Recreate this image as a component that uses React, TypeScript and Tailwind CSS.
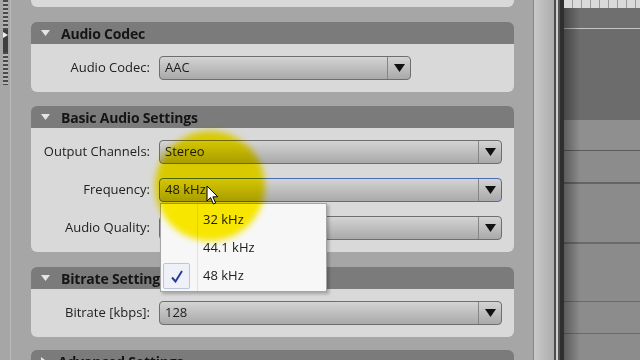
import React from 'react'

type DropProps = {
  value: string
  width: string
  focused?: boolean
}

function Dropdown({ value, width, focused }: DropProps) {
  return (
    <div
      className={`${width} h-[24px] flex rounded-[4px] border bg-gradient-to-b from-[#d4d4d4] to-[#a9a9a9] ${
        focused ? 'border-[#4d6bb3]' : 'border-[#6e6e6e]'
      }`}
    >
      <div className="flex-1 flex items-center pl-[5px] text-[13px] text-[#1c1c1c]">
        {value}
      </div>
      <div className="w-[23px] flex items-center justify-center border-l border-[#858585]">
        <svg width="11" height="8" viewBox="0 0 11 8">
          <path d="M0 0 H11 L5.5 8 Z" fill="#111" />
        </svg>
      </div>
    </div>
  )
}

function Header({ title, open = true }: { title: string; open?: boolean }) {
  return (
    <div className="h-[22px] shrink-0 rounded-t-[6px] bg-[#7b7b7b] flex items-center pl-[10px] gap-[11px]">
      {open ? (
        <svg width="9" height="6" viewBox="0 0 9 6">
          <path d="M0 0 H9 L4.5 6 Z" fill="#e4e4e4" />
        </svg>
      ) : (
        <svg width="6" height="9" viewBox="0 0 6 9">
          <path d="M0 0 V9 L6 4.5 Z" fill="#e4e4e4" />
        </svg>
      )}
      <span className="font-bold text-[14px] text-[#151515] tracking-[-0.2px]">{title}</span>
    </div>
  )
}

function Row({ label, children }: { label: string; children: React.ReactNode }) {
  return (
    <div className="flex items-center">
      <div className="w-[128px] pr-[9px] text-right text-[13px] text-[#222]">{label}</div>
      {children}
    </div>
  )
}

export default function App() {
  return (
    <div className="relative w-[640px] h-[360px] overflow-hidden flex bg-[#a6a6a6] font-['Open_Sans',sans-serif]">
      {/* left edge strip */}
      <div className="w-[31px] shrink-0 flex">
        <div className="ml-[3px] w-[5px] h-[85px] flex flex-col">
          <div className="h-[30px] bg-[repeating-linear-gradient(to_bottom,#4a4a4a_0px,#4a4a4a_2px,#b5b5b5_2px,#b5b5b5_4px)]" />
          <div className="h-[22px] bg-[#3f3f3f] flex items-start">
            <svg width="5" height="6" viewBox="0 0 5 6" className="mt-[2px]">
              <path d="M0 0 L5 3 L0 6 Z" fill="#eee" />
            </svg>
          </div>
          <div className="flex-1 bg-[repeating-linear-gradient(to_bottom,#4a4a4a_0px,#4a4a4a_2px,#b5b5b5_2px,#b5b5b5_4px)]" />
        </div>
        <div className="ml-[2px] w-px bg-[#bcbcbc]" />
      </div>

      {/* settings panel */}
      <div className="w-[483px] shrink-0 flex flex-col">
        <div className="h-[7px] shrink-0 rounded-b-[6px] bg-[#d9d9d9]" />

        <div className="mt-[15px] shrink-0">
          <Header title="Audio Codec" />
          <div className="rounded-b-[6px] bg-[#d9d9d9] py-[12px] pr-[12px]">
            <Row label="Audio Codec:">
              <Dropdown value="AAC" width="w-[252px]" />
            </Row>
          </div>
        </div>

        <div className="mt-[14px] shrink-0">
          <Header title="Basic Audio Settings" />
          <div className="rounded-b-[6px] bg-[#d9d9d9] py-[12px] pr-[12px] flex flex-col gap-[14px]">
            <Row label="Output Channels:">
              <Dropdown value="Stereo" width="w-[343px]" />
            </Row>
            <Row label="Frequency:">
              <Dropdown value="48 kHz" width="w-[343px]" focused />
            </Row>
            <Row label="Audio Quality:">
              <Dropdown value="" width="w-[343px]" />
            </Row>
          </div>
        </div>

        <div className="mt-[15px] shrink-0">
          <Header title="Bitrate Settings" />
          <div className="rounded-b-[6px] bg-[#d9d9d9] py-[12px] pr-[12px]">
            <Row label="Bitrate [kbps]:">
              <Dropdown value="128" width="w-[343px]" />
            </Row>
          </div>
        </div>

        <div className="mt-[13px] shrink-0">
          <Header title="Advanced Settings" open={false} />
        </div>
      </div>

      {/* splitter */}
      <div className="w-[20px] shrink-0 border-r border-[#878787]" />
      <div className="w-[20px] shrink-0 bg-gradient-to-r from-[#c9c9c9] to-[#adadad]" />
      <div className="w-[10px] shrink-0 flex">
        <div className="w-[2px] bg-[#4c4c4c]" />
        <div className="w-[2px] bg-[#cfcfcf]" />
        <div className="w-[2px] bg-[#555]" />
        <div className="flex-1 bg-[#2f2f2f]" />
      </div>

      {/* timeline area */}
      <div className="relative flex-1 flex flex-col">
        <div className="h-[8px] shrink-0 bg-[repeating-linear-gradient(to_right,#dadada_0px,#dadada_8px,#9a9a9a_8px,#9a9a9a_9px)]" />
        <div className="h-[20px] shrink-0 bg-[#6f6f6f]" />
        <div className="h-px shrink-0 bg-[#c4c4c4]" />
        <div className="h-[91px] shrink-0 bg-[#6c6c6c]" />
        <div className="h-[30px] shrink-0 bg-[#8f8f8f]" />
        <div className="h-px shrink-0 bg-[#5c5c5c]" />
        <div className="h-[31px] shrink-0 bg-[#8c8c8c]" />
        <div className="h-[2px] shrink-0 bg-[#646464]" />
        <div className="h-[58px] shrink-0 bg-[#8b8b8b]" />
        <div className="h-[2px] shrink-0 bg-[#6a6a6a]" />
        <div className="h-[57px] shrink-0 bg-[#8b8b8b]" />
        <div className="h-px shrink-0 bg-[#6a6a6a]" />
        <div className="h-[31px] shrink-0 bg-[#8c8c8c]" />
        <div className="h-px shrink-0 bg-[#6a6a6a]" />
        <div className="flex-1 bg-[#8c8c8c]" />
        <div className="absolute left-0 top-[8px] bottom-0 w-[16px] bg-gradient-to-r from-black/35 to-transparent" />
      </div>

      {/* open dropdown list */}
      <div className="absolute left-[160px] top-[203px] w-[167px] h-[89px] bg-[#f7f7f7] border border-[#a3a3a3] shadow-[2px_2px_3px_rgba(0,0,0,0.25)] flex">
        <div className="w-[37px] border-r border-[#e2e2e2] flex flex-col justify-end pb-[2px] pl-[2px]">
          <div className="w-[27px] h-[26px] rounded-[2px] border border-[#b9c6dc] bg-[#eef2f8] flex items-center justify-center">
            <svg width="12" height="13" viewBox="0 0 12 13">
              <path d="M1 7.5 L4.5 11.5 L11 1" fill="none" stroke="#2b3b9c" strokeWidth="2" />
            </svg>
          </div>
        </div>
        <div className="flex-1 flex flex-col pl-[5px] pt-[6px] gap-[8px] text-[13px] text-[#202020]">
          <div className="h-[20px] flex items-center">32 kHz</div>
          <div className="h-[20px] flex items-center">44.1 kHz</div>
          <div className="h-[20px] flex items-center">48 kHz</div>
        </div>
      </div>

      {/* yellow cursor highlight */}
      <div className="absolute left-[155px] top-[131px] w-[110px] h-[110px] rounded-full bg-[#ffee00] mix-blend-multiply blur-[3px]" />

      {/* mouse pointer */}
      <svg className="absolute left-[206px] top-[185px]" width="14" height="21" viewBox="0 0 14 21">
        <path
          d="M1 1 L1 16 L4.6 12.6 L7.4 19 L9.6 18 L6.9 11.8 L11.8 11.8 Z"
          fill="#fff"
          stroke="#000"
          strokeWidth="1"
          strokeLinejoin="round"
        />
      </svg>
    </div>
  )
}
